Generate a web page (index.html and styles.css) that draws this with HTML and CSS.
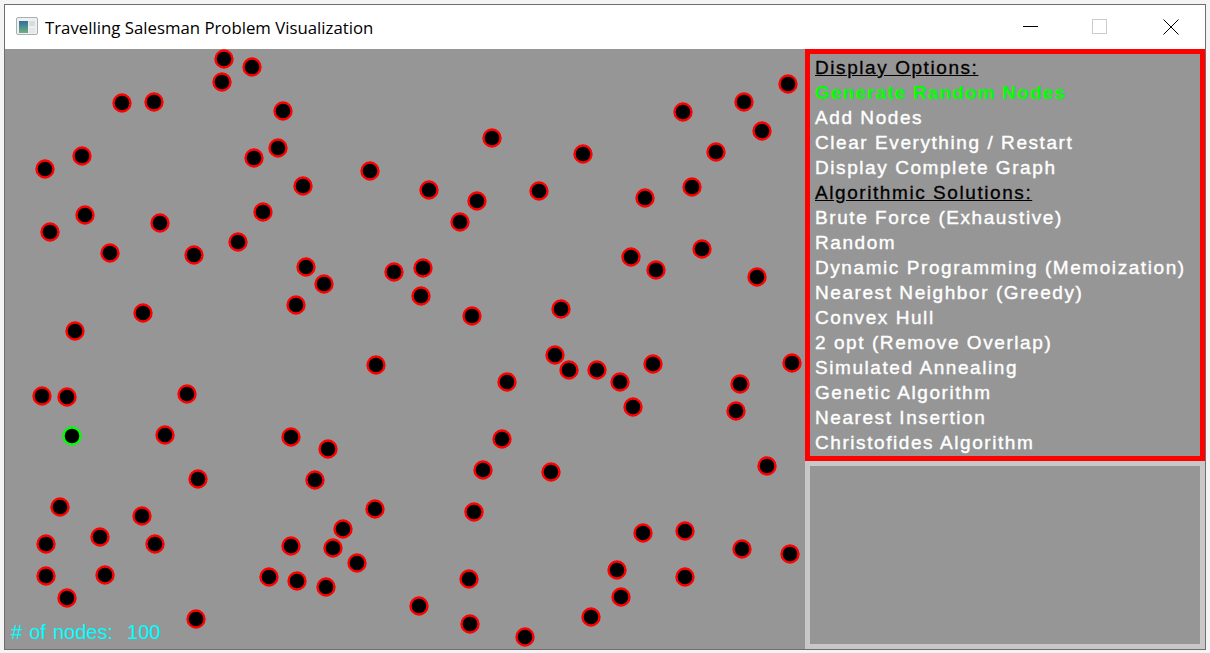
FILE: index.html
```html
<!DOCTYPE html>
<html lang="en">
<head>
  <meta charset="UTF-8" />
  <title>Travelling Salesman Problem Visualization</title>
  <link rel="stylesheet" href="styles.css">
</head>
<body>
  <div class="window">
    <div class="titlebar">
      <svg class="app-icon" width="23" height="19" viewBox="0 0 23 19">
        <defs>
          <linearGradient id="appGrad" x1="0" y1="0" x2="0" y2="1">
            <stop offset="0" stop-color="#2f6f9f"/>
            <stop offset="1" stop-color="#6fb07f"/>
          </linearGradient>
        </defs>
        <rect x="0.5" y="0.5" width="21" height="17" rx="1.5" fill="#eef0f0" stroke="#a9b0b4"/>
        <rect x="3" y="4" width="9" height="12" fill="url(#appGrad)"/>
        <rect x="13" y="4" width="6" height="5" fill="#d8dedd"/>
        <rect x="13" y="11" width="6" height="5" fill="#e4e8e7"/>
      </svg>
      <span class="title">Travelling Salesman Problem Visualization</span>
      <div class="controls">
        <svg class="ctl-min" width="16" height="16" viewBox="0 0 16 16"><path d="M0 7.5H15" stroke="#000" fill="none"/></svg>
        <svg class="ctl-max" width="16" height="16" viewBox="0 0 16 16"><rect x="0.5" y="0.5" width="14" height="14" stroke="#ccc" fill="none"/></svg>
        <svg class="ctl-close" width="16" height="16" viewBox="0 0 16 16"><path d="M0.5 0.5L15.5 15.5M15.5 0.5L0.5 15.5" stroke="#000" fill="none"/></svg>
      </div>
    </div>

    <div class="content">
      <div class="canvas">
        <svg class="graph" id="graph" width="800" height="601" viewBox="5 49 800 601"></svg>
        <div class="node-count"># of nodes:&nbsp; 100</div>
      </div>
      <div class="side">
        <div class="menu">
          <div class="menu-head">Display Options:</div>
          <div class="menu-item active">Generate Random Nodes</div>
          <div class="menu-item">Add Nodes</div>
          <div class="menu-item">Clear Everything / Restart</div>
          <div class="menu-item">Display Complete Graph</div>
          <div class="menu-head">Algorithmic Solutions:</div>
          <div class="menu-item">Brute Force (Exhaustive)</div>
          <div class="menu-item">Random</div>
          <div class="menu-item">Dynamic Programming (Memoization)</div>
          <div class="menu-item">Nearest Neighbor (Greedy)</div>
          <div class="menu-item">Convex Hull</div>
          <div class="menu-item">2 opt (Remove Overlap)</div>
          <div class="menu-item">Simulated Annealing</div>
          <div class="menu-item">Genetic Algorithm</div>
          <div class="menu-item">Nearest Insertion</div>
          <div class="menu-item">Christofides Algorithm</div>
        </div>
        <div class="info"></div>
      </div>
    </div>
  </div>

  <script>
    // node positions, window coordinates
    const nodes = [
      [224,59],[252,67],[222,82],[122,103],[154,102],[283,111],[788,84],[683,112],[744,102],[762,131],
      [492,138],[583,154],[716,152],[45,169],[82,156],[254,158],[278,148],[370,171],[303,186],[429,190],
      [477,201],[539,191],[645,198],[692,187],[85,215],[50,232],[160,223],[263,212],[460,222],[238,242],
      [110,253],[194,255],[702,249],[631,257],[656,270],[757,277],[306,267],[324,284],[394,272],[423,268],
      [421,296],[296,305],[143,313],[472,316],[561,309],[75,331],[376,365],[555,355],[569,370],[597,370],
      [620,382],[653,364],[792,363],[740,384],[507,382],[42,396],[67,397],[187,394],[633,407],[736,411],
      [165,435],[291,437],[328,449],[502,439],[483,470],[551,472],[767,466],[198,479],[315,480],[60,507],
      [142,516],[375,509],[474,512],[343,529],[100,537],[46,544],[155,544],[291,546],[333,548],[357,563],
      [643,533],[685,531],[742,549],[790,554],[617,570],[46,576],[105,575],[269,577],[297,581],[326,587],
      [469,579],[685,577],[67,598],[621,597],[419,606],[196,619],[591,617],[470,624],[525,637]
    ];
    const start = [72,436];

    const graph = document.getElementById("graph");
    function addNode(pos, cls) {
      const c = document.createElementNS("http://www.w3.org/2000/svg", "circle");
      c.setAttribute("cx", pos[0]);
      c.setAttribute("cy", pos[1]);
      c.setAttribute("r", 8.5);
      c.setAttribute("class", cls);
      graph.appendChild(c);
    }
    nodes.forEach(n => addNode(n, "node"));
    addNode(start, "node start");
  </script>
</body>
</html>
```

FILE: styles.css
```css
* {
  margin: 0;
  padding: 0;
  box-sizing: border-box;
}
html, body {
  width: 100%;
  height: 100%;
  overflow: hidden;
  background: #f4f4f4;
}
body {
  padding: 4px 4px 3px 4px;
}
.window {
  height: 100%;
  display: flex;
  flex-direction: column;
  border: 1px solid #6e6e6e;
  background: #fff;
}

/* title bar */
.titlebar {
  height: 44px;
  flex: none;
  display: flex;
  align-items: center;
  padding-left: 11px;
  background: #fff;
}
.app-icon {
  margin-top: -2px;
}
.title {
  margin-left: 6px;
  font-family: "Open Sans", "Noto Sans", sans-serif;
  font-size: 16.8px;
  color: #000;
  white-space: nowrap;
}
.controls {
  margin-left: auto;
  display: flex;
  gap: 53px;
  padding-right: 26px;
}
.ctl-close {
  margin-left: 2px;
}

/* main area */
.content {
  flex: 1;
  display: flex;
  background: #969696;
  min-height: 0;
}
.canvas {
  position: relative;
  width: 800px;
  flex: none;
  overflow: hidden;
}
.graph {
  display: block;
}
.node {
  fill: #000;
  stroke: #f00;
  stroke-width: 2.4;
}
.node.start {
  stroke: #0f0;
}
.node-count {
  position: absolute;
  left: 6px;
  bottom: 5px;
  font-family: "Liberation Sans", Arial, sans-serif;
  font-size: 20px;
  word-spacing: 1.5px;
  color: #0ff;
}

/* right side panels */
.side {
  flex: 1;
  display: flex;
  flex-direction: column;
}
.menu {
  height: 412px;
  flex: none;
  border: 5px solid #f00;
  padding: 1px 5px 0;
  font-family: "Liberation Sans", Arial, sans-serif;
  font-size: 19px;
  letter-spacing: 1.57px;
  line-height: 25px;
  white-space: nowrap;
  color: #fff;
}
.menu-head {
  color: #000;
  text-decoration: underline;
  -webkit-text-stroke: 0.3px #000;
}
.menu-item {
  -webkit-text-stroke: 0.4px #fff;
}
.menu-item.active {
  color: #0f0;
  font-weight: bold;
  letter-spacing: 1.15px;
  -webkit-text-stroke: 0;
}
.info {
  flex: 1;
  border: 5px solid #c8c8c8;
}
```
